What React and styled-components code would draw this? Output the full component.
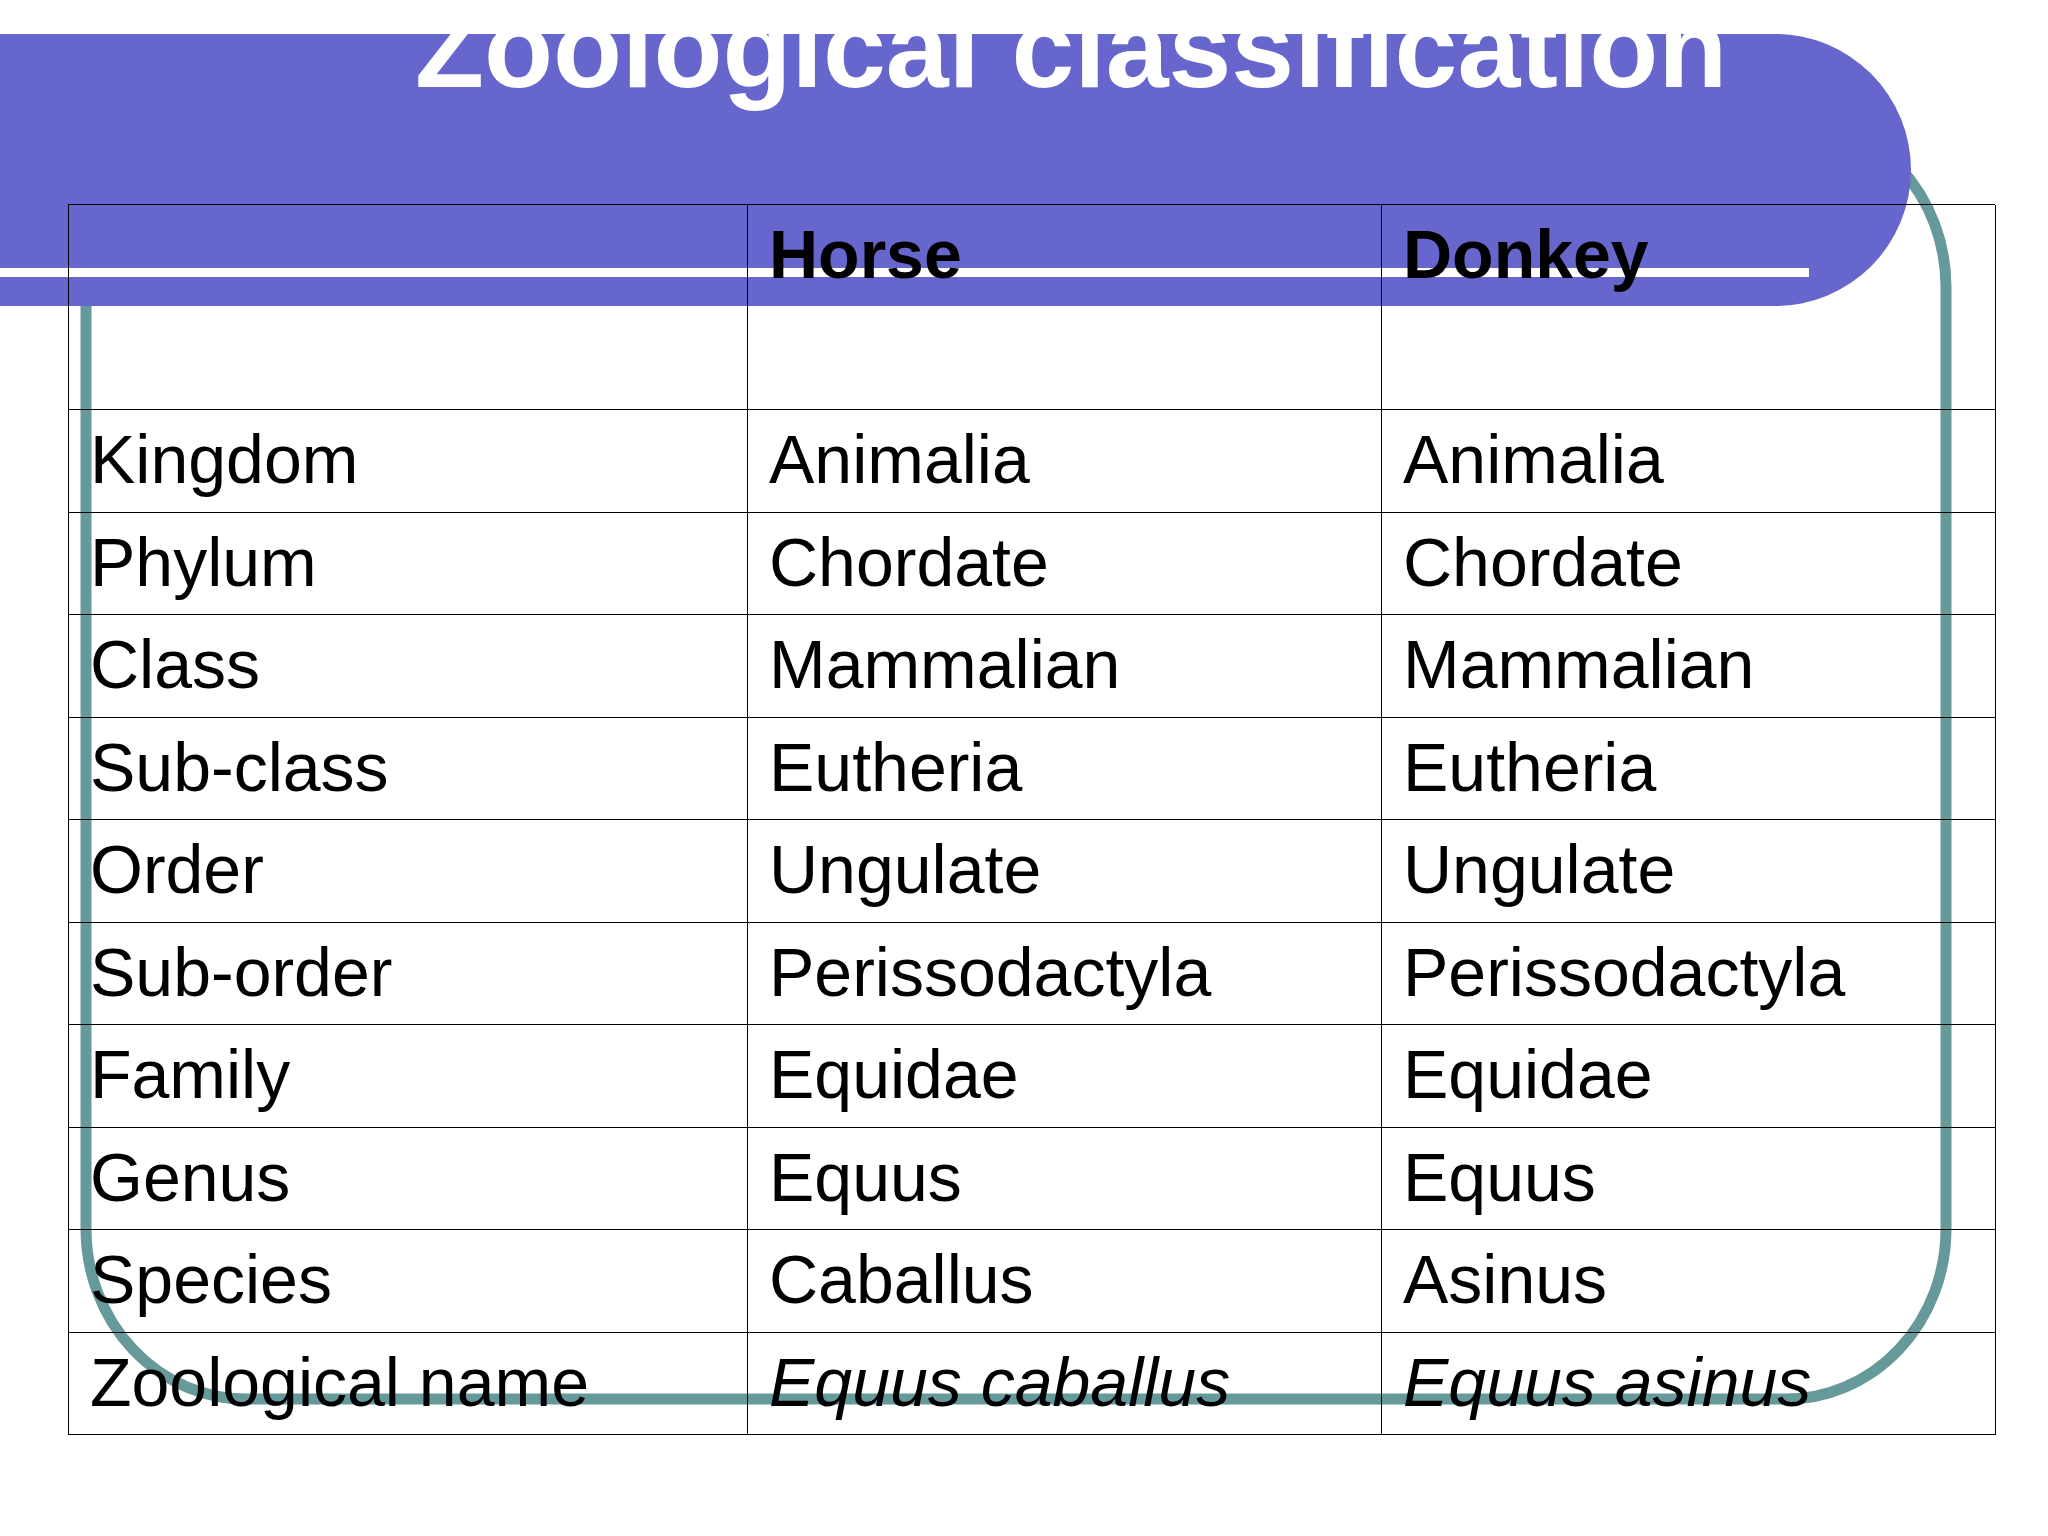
import React from 'react';
import styled, { createGlobalStyle } from 'styled-components';

const GlobalStyle = createGlobalStyle`
  html, body {
    margin: 0;
    padding: 0;
    background: #ffffff;
  }
  body {
    font-family: "Liberation Sans", Arial, sans-serif;
  }
`;

const Slide = styled.div`
  position: relative;
  width: 2048px;
  height: 1536px;
  overflow: hidden;
  background: #ffffff;
  display: flex;
  flex-direction: column;
`;

const Frame = styled.svg`
  position: absolute;
  left: 0;
  top: 0;
  z-index: 0;
`;

const TitleBar = styled.div`
  position: relative;
  z-index: 1;
  display: flex;
  align-items: flex-start;
  width: 1911px;
  height: 272px;
  margin-top: 34px;
  padding-left: 415px;
  box-sizing: border-box;
  background: #6666cc;
  border-radius: 0 136px 136px 0 / 0 136px 136px 0;

  &::after {
    content: '';
    position: absolute;
    left: 0;
    top: 234px;
    width: 1809px;
    height: 9px;
    background: #ffffff;
  }
`;

const Title = styled.h1`
  margin: -42px 0 0 0;
  font-size: 113px;
  line-height: 1;
  font-weight: 700;
  color: #ffffff;
  white-space: nowrap;
`;

const Grid = styled.div`
  position: relative;
  z-index: 2;
  display: grid;
  grid-template-columns: 679px 634px 614px;
  grid-template-rows: 205px repeat(10, 102.5px);
  margin: -102px 0 0 68px;
  width: 1927px;
  box-sizing: border-box;
  border-top: 1.5px solid #000;
  border-left: 1.5px solid #000;
`;

const Cell = styled.div`
  box-sizing: border-box;
  padding: 11px 0 0 21px;
  border-right: 1.5px solid #000;
  border-bottom: 1.5px solid #000;
  font-size: 68px;
  font-weight: ${(p) => (p.$head ? 700 : 400)};
  font-style: ${(p) => (p.$italic ? 'italic' : 'normal')};
  line-height: 1.13;
  color: #000;
  white-space: nowrap;
`;

const rows = [
  ['Kingdom', 'Animalia', 'Animalia'],
  ['Phylum', 'Chordate', 'Chordate'],
  ['Class', 'Mammalian', 'Mammalian'],
  ['Sub-class', 'Eutheria', 'Eutheria'],
  ['Order', 'Ungulate', 'Ungulate'],
  ['Sub-order', 'Perissodactyla', 'Perissodactyla'],
  ['Family', 'Equidae', 'Equidae'],
  ['Genus', 'Equus', 'Equus'],
  ['Species', 'Caballus', 'Asinus'],
];

// teal rounded frame behind the table
const framePath = (() => {
  const l = 86, r = 1946, t = 117, b = 1399, rx = 160, ry = 170;
  return `M ${l + rx} ${t} H ${r - rx} A ${rx} ${ry} 0 0 1 ${r} ${t + ry} V ${b - ry} A ${rx} ${ry} 0 0 1 ${r - rx} ${b} H ${l + rx} A ${rx} ${ry} 0 0 1 ${l} ${b - ry} V ${t + ry} A ${rx} ${ry} 0 0 1 ${l + rx} ${t} Z`;
})();

function App() {
  return (
    <>
      <GlobalStyle />
      <Slide>
        <Frame width="2048" height="1536" viewBox="0 0 2048 1536">
          <path d={framePath} fill="none" stroke="#669999" strokeWidth="11" />
        </Frame>
        <TitleBar>
          <Title>Zoological classification</Title>
        </TitleBar>
        <Grid>
          <Cell $head />
          <Cell $head>Horse</Cell>
          <Cell $head>Donkey</Cell>
          {rows.map((row) =>
            row.map((text, i) => <Cell key={row[0] + i}>{text}</Cell>)
          )}
          <Cell>Zoological name</Cell>
          <Cell $italic>Equus caballus</Cell>
          <Cell $italic>Equus asinus</Cell>
        </Grid>
      </Slide>
    </>
  );
}

export default App;
